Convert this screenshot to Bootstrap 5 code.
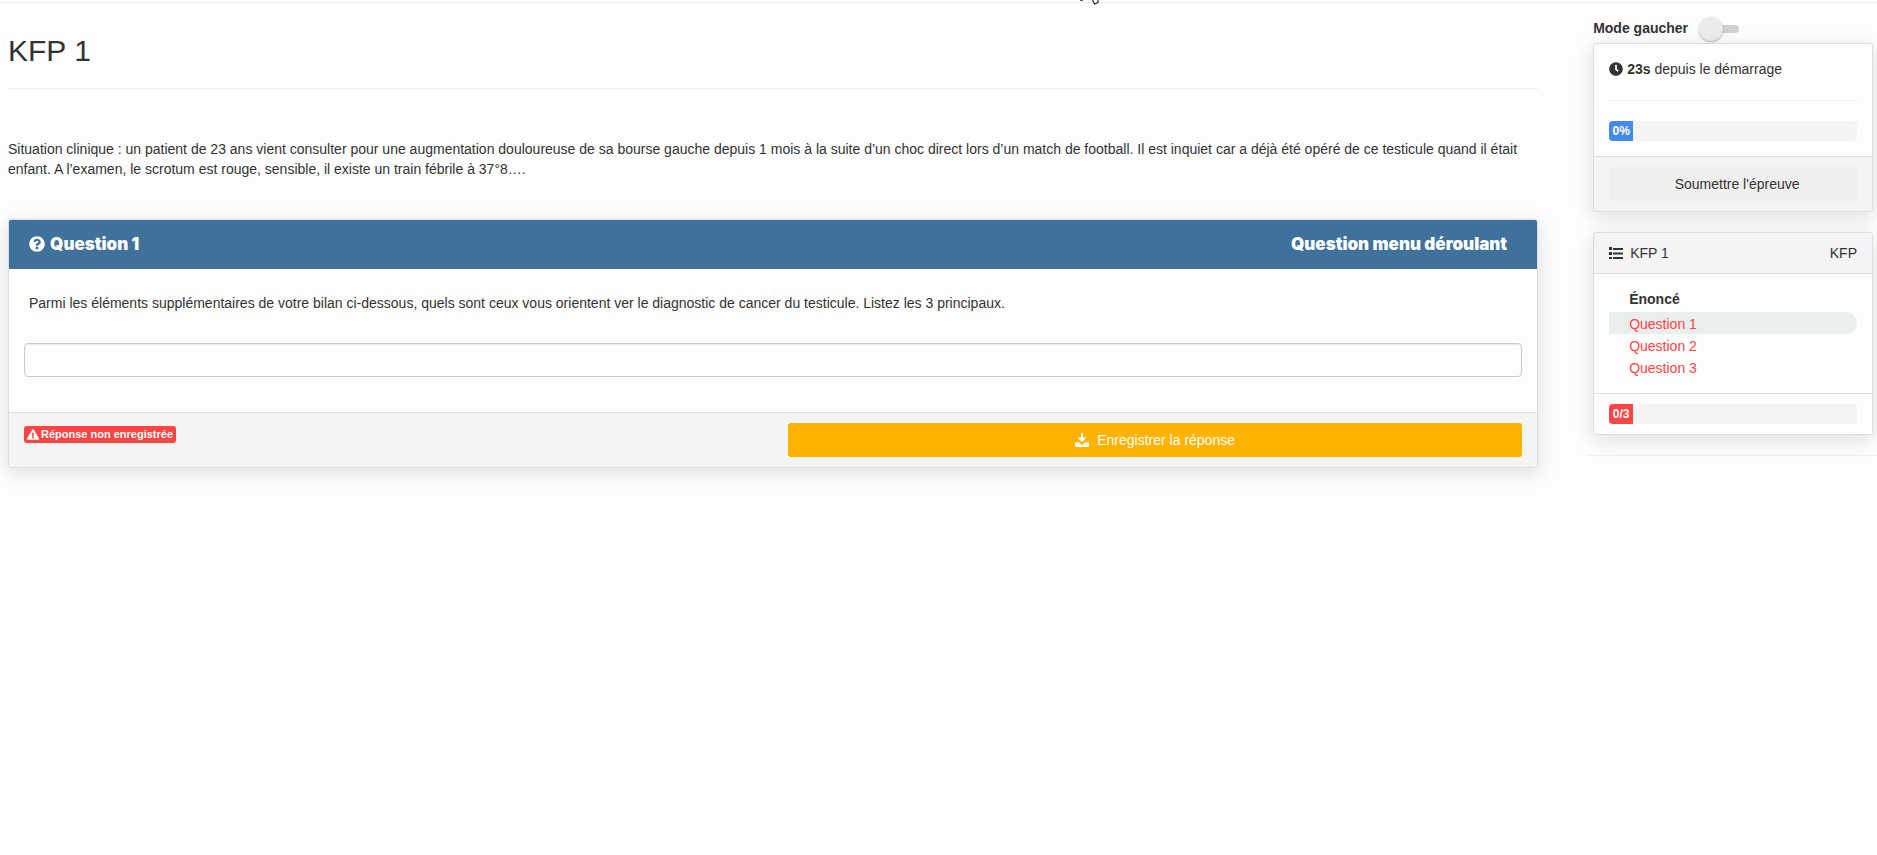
<!DOCTYPE html>
<html lang="fr">
<head>
<meta charset="utf-8">
<meta name="viewport" content="width=device-width, initial-scale=1">
<title>KFP 1</title>
<link href="https://cdn.jsdelivr.net/npm/bootstrap@5.3.0/dist/css/bootstrap.min.css" rel="stylesheet">
<style>
  :root { --line: #ddd; --rule: #eee; --panel: #f4f4f4; --ink: #333; }
  body { font-family: "Liberation Sans", Arial, sans-serif; font-size: 14px; line-height: 20px; color: var(--ink); background: #fdfdfd; min-height: 100vh; }
  .fa-ico { fill: currentColor; flex: none; }
  .top-rule { height: 3px; border-bottom: 1px solid var(--rule); }
  .rule { border: 0; border-top: 1px solid var(--rule); opacity: 1; margin: 20px 0; }
  .main-col { padding: 21px 26px 0 8px; }
  .side-col { padding: 15px 0 0 24px; }
  .side-stack { padding: 0 4px 0 5px; }
  .exam-title { font-size: 30px; line-height: 34px; margin: 10px 0 20px; font-weight: 400; }
  .statement { margin: 50px 0 40px; }
  .panel-box { --bs-card-border-color: var(--line); --bs-card-border-radius: 3px; --bs-card-inner-border-radius: 2px; --bs-card-bg: #fdfdfd; --bs-card-color: var(--ink); --bs-card-cap-bg: var(--panel); --bs-card-cap-padding-x: 15px; --bs-card-cap-padding-y: 10px; --bs-card-spacer-x: 15px; --bs-card-spacer-y: 15px; box-shadow: 0 5px 20px rgba(0, 0, 0, .12); }
  .question-head { background: #40719a; color: #fff; border-bottom: 0; padding: 14px 30px 15px 20px; }
  .question-head h2 { font-family: "Arial Black", Inter, "Liberation Sans", sans-serif; font-size: 17px; line-height: 20px; font-weight: 900; margin: 0; gap: 5px; }
  .question-body { padding: 24px 15px 35px; }
  .question-text { margin: 0 0 30px; padding: 0 5px; }
  .answer { height: 34px; border: 1px solid #ccc; border-radius: 4px; background: #fdfdfd; font-size: 14px; box-shadow: inset 0 1px 1px rgba(0, 0, 0, .08); }
  .tag-warn { background: #f44; color: #fff; font-size: 11px; line-height: 11px; font-weight: 700; border-radius: 3px; padding: 3px; margin-top: 3px; gap: 2px; }
  .save-col { padding-left: 15px; }
  .action { height: 34px; border: 0; border-radius: 3px; font-size: 14px; line-height: 20px; padding: 7px 12px; }
  .action-save, .action-save:hover { background: #ffb300; color: #fff; }
  .action-submit, .action-submit:hover { background: #efefef; color: var(--ink); padding-left: 20px; }
  .mode-label { font-weight: 700; }
  .mode-switch { appearance: none; position: relative; width: 40px; height: 20px; margin: 0 0 0 11px; background: none; border: 0; }
  .mode-switch::before { content: ""; position: absolute; inset: 7px 0 5px 4px; border-radius: 4px; background: #d0d0d0; }
  .mode-switch::after { content: ""; position: absolute; left: 0; top: -1px; width: 24px; height: 24px; border-radius: 50%; background: #ececec; box-shadow: 0 1px 2px rgba(0, 0, 0, .3); }
  .mode-switch:checked::after { left: auto; right: 0; }
  .timer-card { margin-top: 5px; }
  .timer { padding-bottom: 1px; }
  .toc-title { gap: 7px; }
  .toc-card { margin-top: 20px; }
  .meter { --bs-progress-height: 20px; --bs-progress-bg: var(--panel); --bs-progress-border-radius: 4px; --bs-progress-font-size: 12px; font-weight: 700; }
  .meter .progress-bar { min-width: 24px; }
  .meter-blue { background: #428bea; }
  .meter-red { background: #f44; }
  .toc a { display: block; line-height: 20px; padding: 2px 0 0 20px; color: #f44; text-decoration: none; border-radius: 0 11px 11px 0; }
  .toc a.heading-link { color: var(--ink); font-weight: 700; padding: 0 0 3px 20px; }
  .toc a.current { background: #ebeeef; }
  .panel-foot-plain { --bs-card-cap-bg: #fdfdfd; }
  .pointer { left: 1080px; top: 0; }
</style>
</head>
<body>
<div class="top-rule"></div>
<svg class="pointer position-absolute" width="20" height="5" viewBox="0 0 20 5" fill="none" stroke="#2b2833" aria-hidden="true"><path d="M0 0h3" stroke-width="1.500"/><path d="M12.500 0l2 4 3.500-1.500V0" fill="#fff" stroke-width="1.200"/></svg>
<div class="row g-0">
  <main class="col-10 main-col">
    <h1 class="exam-title">KFP 1</h1>
    <hr class="rule">
    <p class="statement">Situation clinique : un patient de 23 ans vient consulter pour une augmentation douloureuse de sa bourse gauche depuis 1 mois à la suite d’un choc direct lors d’un match de football. Il est inquiet car a déjà été opéré de ce testicule quand il était enfant. A l’examen, le scrotum est rouge, sensible, il existe un train fébrile à 37°8….</p>
    <form class="card panel-box mb-5" onsubmit="return false">
      <div class="card-header question-head d-flex justify-content-between">
        <h2 class="d-flex align-items-center"><svg class="fa-ico" width="16" height="16" viewBox="0 0 512 512" aria-hidden="true"><path d="M504 256c0 136.997-111.043 248-248 248S8 392.997 8 256C8 119.083 119.043 8 256 8s248 111.083 248 248zM262.655 90c-54.497 0-89.255 22.957-116.549 63.758-3.536 5.286-2.353 12.415 2.715 16.258l34.699 26.31c5.205 3.947 12.621 3.008 16.665-2.122 17.864-22.658 30.113-35.797 57.303-35.797 20.429 0 45.698 13.148 45.698 32.958 0 14.976-12.363 22.667-32.534 33.976C247.128 238.528 216 254.941 216 296v4c0 6.627 5.373 12 12 12h56c6.627 0 12-5.373 12-12v-1.333c0-28.462 83.186-29.647 83.186-106.667 0-58.002-60.165-102-116.531-102zM256 338c-25.365 0-46 20.635-46 46 0 25.364 20.635 46 46 46s46-20.636 46-46c0-25.365-20.635-46-46-46z"/></svg>Question 1</h2>
        <h2>Question menu déroulant</h2>
      </div>
      <div class="card-body question-body">
        <p class="question-text"><label for="answer">Parmi les éléments supplémentaires de votre bilan ci-dessous, quels sont ceux vous orientent ver le diagnostic de cancer du testicule. Listez les 3 principaux.</label></p>
        <input class="form-control answer" id="answer" type="text">
      </div>
      <div class="card-footer">
        <div class="row g-0 align-items-start">
          <div class="col-6 d-flex"><span class="tag-warn d-inline-flex align-items-center"><svg class="fa-ico" width="12" height="11" viewBox="0 0 576 512" aria-hidden="true"><path d="M569.517 440.013C587.975 472.007 564.806 512 527.940 512H48.054c-36.937 0-59.999-40.055-41.577-71.987L246.423 23.985c18.467-32.009 64.720-31.951 83.154 0l239.940 416.028zM288 354c-25.405 0-46 20.595-46 46s20.595 46 46 46 46-20.595 46-46-20.595-46-46-46zm-43.673-165.346l7.418 136c.347 6.364 5.609 11.346 11.982 11.346h48.546c6.373 0 11.635-4.982 11.982-11.346l7.418-136c.375-6.874-5.098-12.654-11.982-12.654h-63.383c-6.884 0-12.356 5.780-11.981 12.654z"/></svg>Réponse non enregistrée</span></div>
          <div class="col-6 save-col"><button class="btn action action-save w-100 d-flex justify-content-center align-items-center gap-2" type="submit"><svg class="fa-ico" width="14" height="14" viewBox="0 0 14 14" aria-hidden="true"><path d="M6 0h2v4.500h3.500L7 9.200 2.500 4.500H6z"/><path fill-rule="evenodd" d="M1.200 9.300h2.400L7 12l3.400-2.700h2.400Q14 9.300 14 10.500v2.300q0 1.200-1.200 1.200H1.200Q0 14 0 12.800v-2.300Q0 9.300 1.200 9.300zM11.300 11.500v1h1v-1z"/></svg>Enregistrer la réponse</button></div>
        </div>
      </div>
    </form>
  </main>
  <aside class="col-2 side-col">
    <div class="side-stack">
      <div class="d-flex"><label class="mode-label" for="mode">Mode gaucher</label><input class="mode-switch" id="mode" type="checkbox" role="switch"></div>
      <section class="card panel-box timer-card">
        <div class="card-body">
          <div class="timer d-flex align-items-center gap-1"><svg class="fa-ico" width="14" height="14" viewBox="0 0 512 512" aria-hidden="true"><path d="M256 8C119 8 8 119 8 256s111 248 248 248 248-111 248-248S393 8 256 8zm92.490 313l-20 25a16 16 0 0 1-22.490 2.500l-67-49.720a40 40 0 0 1-15-31.230V112a16 16 0 0 1 16-16h32a16 16 0 0 1 16 16v144l58 42.500a16 16 0 0 1 2.490 22.500z"/></svg><span><b>23s</b> depuis le démarrage</span></div>
          <hr class="rule">
          <div class="progress meter" role="progressbar" aria-label="Temps" aria-valuenow="0" aria-valuemin="0" aria-valuemax="100"><div class="progress-bar meter-blue" style="width: 0%">0%</div></div>
        </div>
        <div class="card-footer"><button class="btn action action-submit w-100" type="button">Soumettre l'épreuve</button></div>
      </section>
      <section class="card panel-box toc-card">
        <div class="card-header d-flex justify-content-between">
          <span class="toc-title d-flex align-items-center"><svg class="fa-ico" width="14" height="14" viewBox="0 0 14 14" aria-hidden="true"><path d="M0 1h3v3H0zM0 6h3v3H0zM0 11h3v2H0zM4 2h10v2H4zM4 6.500h10v2H4zM4 11h10v2H4z"/></svg>KFP 1</span>
          <span>KFP</span>
        </div>
        <nav class="card-body toc">
          <a class="heading-link" href="#">Énoncé</a>
          <a class="current" href="#">Question 1</a>
          <a href="#">Question 2</a>
          <a href="#">Question 3</a>
        </nav>
        <div class="card-footer panel-foot-plain"><div class="progress meter" role="progressbar" aria-label="Réponses" aria-valuenow="0" aria-valuemin="0" aria-valuemax="3"><div class="progress-bar meter-red" style="width: 0%">0/3</div></div></div>
      </section>
    </div>
    <hr class="rule">
  </aside>
</div>
<script src="https://cdn.jsdelivr.net/npm/bootstrap@5.3.0/dist/js/bootstrap.bundle.min.js"></script>
</body>
</html>
